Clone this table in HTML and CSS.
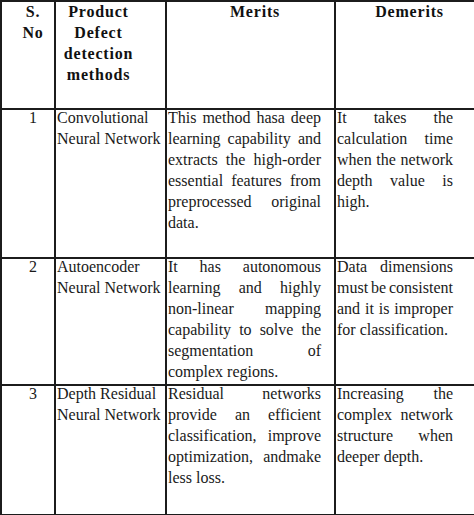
FILE: index.html
```html
<!DOCTYPE html>
<html>
<head>
<meta charset="utf-8">
<link rel="stylesheet" href="styles.css">
</head>
<body>
<table class="tbl">
  <colgroup>
    <col class="c1"><col class="c2"><col class="c3"><col class="c4">
  </colgroup>
  <tr class="hrow">
    <th class="no"><div class="in">S.<br>No</div></th>
    <th class="meth"><div class="in">Product<br>Defect<br>detection<br>methods</div></th>
    <th class="hm"><div class="in">Merits</div></th>
    <th class="hm"><div class="in">Demerits</div></th>
  </tr>
  <tr class="r1">
    <td class="no"><div class="in">1</div></td>
    <td class="meth"><div class="in">Convolutional<br>Neural Network</div></td>
    <td class="mer"><div class="in">
      <div class="j">This method hasa deep</div>
      <div class="j">learning capability and</div>
      <div class="j">extracts the high-order</div>
      <div class="j">essential features from</div>
      <div class="j">preprocessed original</div>
      <div>data.</div>
    </div></td>
    <td class="dem"><div class="in">
      <div class="j">It takes the</div>
      <div class="j">calculation time</div>
      <div class="j">when the network</div>
      <div class="j">depth value is</div>
      <div>high.</div>
    </div></td>
  </tr>
  <tr class="r2">
    <td class="no"><div class="in">2</div></td>
    <td class="meth"><div class="in">Autoencoder<br>Neural Network</div></td>
    <td class="mer"><div class="in">
      <div class="j">It has autonomous</div>
      <div class="j">learning and highly</div>
      <div class="j">non-linear mapping</div>
      <div class="j">capability to solve the</div>
      <div class="j">segmentation of</div>
      <div>complex regions.</div>
    </div></td>
    <td class="dem"><div class="in">
      <div class="j">Data dimensions</div>
      <div class="j">must be consistent</div>
      <div class="j">and it is improper</div>
      <div>for classification.</div>
    </div></td>
  </tr>
  <tr class="r3">
    <td class="no"><div class="in">3</div></td>
    <td class="meth"><div class="in">Depth Residual<br>Neural Network</div></td>
    <td class="mer"><div class="in">
      <div class="j">Residual networks</div>
      <div class="j">provide an efficient</div>
      <div class="j">classification, improve</div>
      <div class="j">optimization, andmake</div>
      <div>less loss.</div>
    </div></td>
    <td class="dem"><div class="in">
      <div class="j">Increasing the</div>
      <div class="j">complex network</div>
      <div class="j">structure when</div>
      <div>deeper depth.</div>
    </div></td>
  </tr>
</table>
</body>
</html>
```
FILE: styles.css
```css
html, body {
  margin: 0;
  padding: 0;
  background: #ffffff;
}
.tbl {
  border-collapse: collapse;
  table-layout: fixed;
  width: 474px;
  font-family: "Liberation Serif", "Times New Roman", serif;
  font-size: 16px;
  line-height: 21px;
  color: #1a1a1a;
  border: 2px solid #1c1c1c;
}
.c1 { width: 54px; }
.c2 { width: 111px; }
.c3 { width: 169px; }
.c4 { width: 140px; }
.tbl th, .tbl td {
  border: 2px solid #1c1c1c;
  vertical-align: top;
  padding: 0 1px;
  text-align: left;
}
.tbl th {
  font-weight: bold;
  letter-spacing: 0.8px;
  text-align: center;
  color: #111111;
}
.hrow { height: 108px; }
.r1 { height: 149px; }
.r2 { height: 127px; }
.r3 { height: 130px; }
.in { margin-top: -3px; }
.hrow .in { margin-top: -1px; }
.tbl .no { text-align: center; padding-left: 11px; }
.tbl th.meth { padding-right: 25px; }
.tbl th.hm { padding-left: 10px; }
.mer { padding-right: 13px !important; }
.dem { padding-right: 21px !important; }
.j {
  text-align: justify;
  text-align-last: justify;
  word-spacing: -2px;
}
```
